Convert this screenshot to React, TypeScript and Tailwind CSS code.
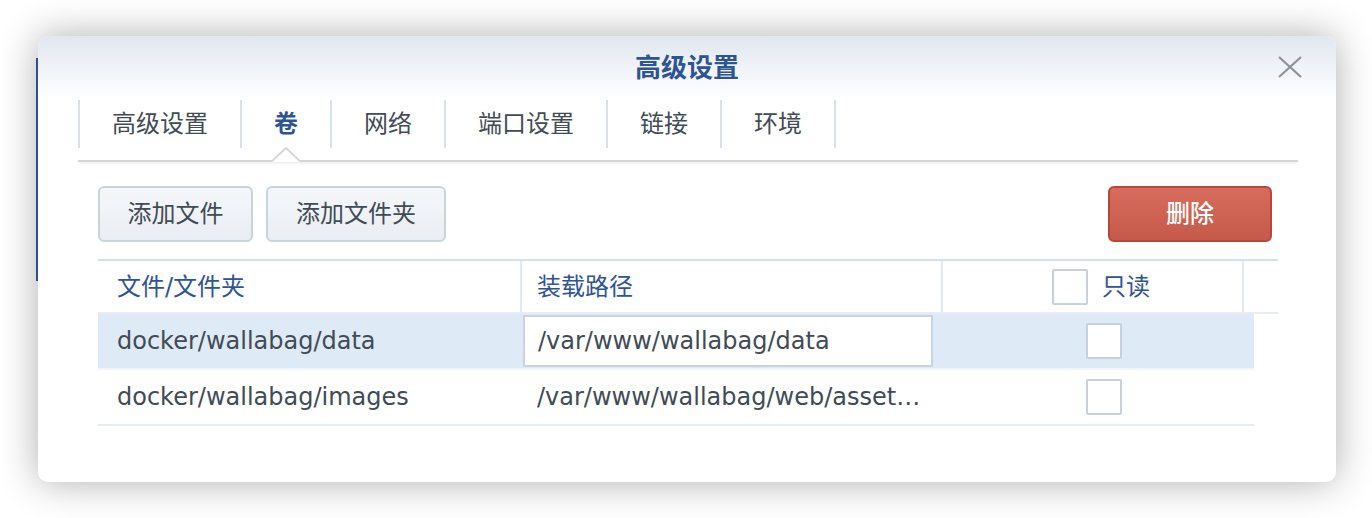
import React from "react";

function Tab({ label, active, last }: { label: string; active?: boolean; last?: boolean }) {
  return (
    <div
      className={
        "flex items-center px-[32px] border-l-2 border-[#d8e1ec] text-[24px] leading-none " +
        (last ? "border-r-2 " : "") +
        (active ? "font-bold text-[#2d5593]" : "text-[#414b55]")
      }
    >
      {label}
    </div>
  );
}

function Checkbox() {
  return <div className="w-[36px] h-[36px] border-2 border-[#c8d0dc] bg-white rounded-[2px]" />;
}

export default function App() {
  return (
    <div className="relative w-[1372px] h-[518px] bg-white overflow-hidden pl-[38px] pt-[36px] font-['DejaVu_Sans','Noto_Sans_CJK_SC',sans-serif]">
      <div className="relative flex flex-col w-[1298px] h-[446px] bg-white rounded-[10px] overflow-hidden shadow-[0_0_38px_rgba(0,0,0,0.32)]">
        {/* header */}
        <div className="relative h-[64px] shrink-0 flex items-center justify-center bg-gradient-to-b from-[#e1e7f0] to-white">
          <span className="text-[26px] font-bold text-[#2d5593] leading-none">高级设置</span>
          <svg className="absolute right-[34px] top-[20px]" width="24" height="22" viewBox="0 0 24 22">
            <path d="M1 1 L23 21 M23 1 L1 21" stroke="#8d9298" strokeWidth="2.2" fill="none" />
          </svg>
        </div>

        {/* tabs */}
        <div className="relative ml-[40px] mr-[38px] pb-[12px] border-b-2 border-[#d6d6d6] shadow-[0_3px_2px_-1px_rgba(0,0,0,0.06)]">
          <div className="flex h-[48px]">
            <Tab label="高级设置" />
            <Tab label="卷" active />
            <Tab label="网络" />
            <Tab label="端口设置" />
            <Tab label="链接" />
            <Tab label="环境" last />
          </div>
          <svg className="absolute left-[194px] bottom-[-2px]" width="28" height="15" viewBox="0 0 28 15">
            <polygon points="0,15 14,1 28,15" fill="white" />
            <polyline points="0,14 14,1 28,14" fill="none" stroke="#d6d6d6" strokeWidth="2" />
          </svg>
        </div>

        {/* buttons */}
        <div className="flex justify-between mt-[24px] pl-[60px] pr-[64px]">
          <div className="flex gap-[13px]">
            <button className="h-[56px] w-[155px] rounded-[6px] border-2 border-[#c9d3de] bg-gradient-to-b from-[#f5f7fa] to-[#e9eef4] text-[24px] text-[#414b55]">
              添加文件
            </button>
            <button className="h-[56px] w-[180px] rounded-[6px] border-2 border-[#c9d3de] bg-gradient-to-b from-[#f5f7fa] to-[#e9eef4] text-[24px] text-[#414b55]">
              添加文件夹
            </button>
          </div>
          <button className="h-[56px] w-[164px] rounded-[6px] border-2 border-[#b9463b] bg-gradient-to-b from-[#d76c5c] to-[#c55a4b] text-[24px] text-white font-medium">
            删除
          </button>
        </div>

        {/* table */}
        <div className="ml-[60px] mt-[17px] flex flex-col">
          <div className="grid grid-cols-[422px_421px_303px_34px] w-[1180px] h-[55px] border-t-2 border-b-2 border-t-[#d7e0ea] border-b-[#e8edf3] text-[24px] text-[#2d5593]">
            <div className="flex items-center pl-[19px]">文件/文件夹</div>
            <div className="flex items-center pl-[15px] border-l-2 border-[#e3e9f1]">装载路径</div>
            <div className="flex items-center pl-[109px] gap-[14px] border-l-2 border-r-2 border-[#e3e9f1]">
              <Checkbox />
              <span>只读</span>
            </div>
            <div />
          </div>

          <div className="grid grid-cols-[422px_421px_313px] w-[1156px] h-[56px] border-b-2 border-[#f1f4f8] bg-[#dfeaf7] text-[24px] text-[#414b55]">
            <div className="flex items-center pl-[19px]">docker/wallabag/data</div>
            <div className="flex items-center pl-[3px]">
              <div className="flex items-center w-[410px] h-[52px] bg-white border-2 border-[#c9d3df] pl-[13px]">
                /var/www/wallabag/data
              </div>
            </div>
            <div className="flex items-center pl-[145px]">
              <Checkbox />
            </div>
          </div>

          <div className="grid grid-cols-[422px_421px_313px] w-[1156px] h-[56px] border-b-2 border-[#e8edf3] text-[24px] text-[#414b55]">
            <div className="flex items-center pl-[19px]">docker/wallabag/images</div>
            <div className="flex items-center pl-[17px] pr-[12px] min-w-0">
              <span className="truncate">/var/www/wallabag/web/assets/images</span>
            </div>
            <div className="flex items-center pl-[145px]">
              <Checkbox />
            </div>
          </div>
        </div>
      </div>
      <div className="absolute z-10 left-[36px] top-[58px] w-[2px] h-[223px] bg-[#2c5190]" />
    </div>
  );
}
